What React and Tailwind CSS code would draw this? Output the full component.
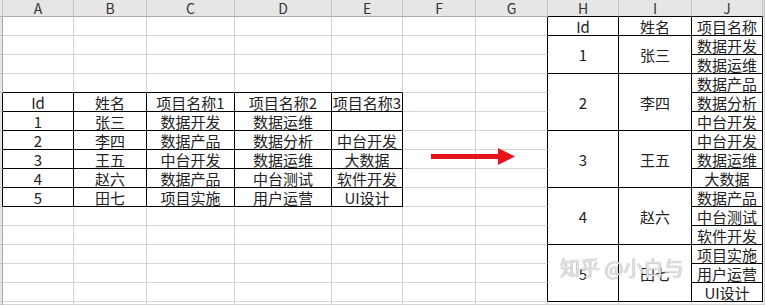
import React from "react";

const FONT = { fontFamily: '"Noto Sans CJK SC", "Noto Sans", sans-serif' };

const LETTERS = ["A", "B", "C", "D", "E", "F", "G", "H", "I", "J", ""];

// Column index: 1 = row-header sliver, 2 = A ... 11 = J, 12 = K (cut off)
// Row index: 1 = column header, 2 = sheet row 1 ... 17 = sheet row 16 (cut off)
const leftTable = [
  ["Id", "姓名", "项目名称1", "项目名称2", "项目名称3"],
  ["1", "张三", "数据开发", "数据运维", ""],
  ["2", "李四", "数据产品", "数据分析", "中台开发"],
  ["3", "王五", "中台开发", "数据运维", "大数据"],
  ["4", "赵六", "数据产品", "中台测试", "软件开发"],
  ["5", "田七", "项目实施", "用户运营", "UI设计"],
];

const groups = [
  { id: "1", name: "张三", items: ["数据开发", "数据运维"] },
  { id: "2", name: "李四", items: ["数据产品", "数据分析", "中台开发"] },
  { id: "3", name: "王五", items: ["中台开发", "数据运维", "大数据"] },
  { id: "4", name: "赵六", items: ["数据产品", "中台测试", "软件开发"] },
  { id: "5", name: "田七", items: ["项目实施", "用户运营", "UI设计"] },
];

function buildCells() {
  const cells = [];
  leftTable.forEach((row, i) => {
    row.forEach((text, j) => {
      cells.push({ r: 6 + i, c: 2 + j, rs: 1, text });
    });
  });
  cells.push({ r: 2, c: 9, rs: 1, text: "Id" });
  cells.push({ r: 2, c: 10, rs: 1, text: "姓名" });
  cells.push({ r: 2, c: 11, rs: 1, text: "项目名称" });
  let r = 3;
  groups.forEach((g) => {
    cells.push({ r, c: 9, rs: g.items.length, text: g.id });
    cells.push({ r, c: 10, rs: g.items.length, text: g.name });
    g.items.forEach((it, k) => cells.push({ r: r + k, c: 11, rs: 1, text: it }));
    r += g.items.length;
  });
  return cells;
}

const tableCells = buildCells();
const occupied = new Set();
tableCells.forEach((t) => {
  for (let k = 0; k < t.rs; k++) occupied.add(`${t.r + k}:${t.c}`);
});
const isTable = (r, c) => occupied.has(`${r}:${c}`);

function gridBorder(right, bottom) {
  if (right && bottom) return "border-r border-b border-r-black border-b-black";
  if (right) return "border-r border-b border-r-black border-b-[#d4d4d4]";
  if (bottom) return "border-r border-b border-r-[#d4d4d4] border-b-black";
  return "border-r border-b border-r-[#d4d4d4] border-b-[#d4d4d4]";
}

function headBorder(bottom) {
  if (bottom) return "border-r border-b border-r-[#c4c4c4] border-b-black";
  return "border-r border-b border-r-[#c4c4c4] border-b-[#ababab]";
}

function Arrow() {
  return (
    <svg
      className="absolute left-[430px] top-[147px]"
      width="86"
      height="19"
      viewBox="0 0 86 19"
    >
      <polygon
        points="1,7 68,7 68,1 85,9.5 68,18 68,12 1,12"
        fill="#e8141c"
      />
    </svg>
  );
}

export default function App() {
  const blanks = [];
  for (let r = 1; r <= 17; r++) {
    for (let c = 1; c <= 12; c++) {
      if (isTable(r, c)) continue;
      const pos = { gridRow: r, gridColumn: c };
      if (r === 1) {
        blanks.push(
          <div
            key={`${r}-${c}`}
            style={pos}
            className={`flex items-center justify-center bg-[#e6e6e6] text-[14px] leading-none text-[#333] ${headBorder(isTable(2, c))}`}
          >
            {c >= 2 ? LETTERS[c - 2] : ""}
          </div>
        );
      } else if (c === 1) {
        blanks.push(
          <div
            key={`${r}-${c}`}
            style={pos}
            className={`bg-[#e6e6e6] ${isTable(r, 2) ? "border-r border-b border-r-black border-b-[#c4c4c4]" : "border-r border-b border-r-[#a8a8a8] border-b-[#c4c4c4]"}`}
          />
        );
      } else {
        blanks.push(
          <div
            key={`${r}-${c}`}
            style={pos}
            className={`bg-white ${gridBorder(isTable(r, c + 1), isTable(r + 1, c))}`}
          />
        );
      }
    }
  }

  return (
    <div className="relative h-[305px] w-[765px] overflow-hidden bg-white" style={FONT}>
      <div className="grid h-full grid-cols-[3px_71px_73px_88px_97px_71px_73px_72px_71px_73px_71px_1fr] grid-rows-[17px_repeat(15,19px)_1fr]">
        {blanks}
        {tableCells.map((t, i) => (
          <div
            key={`t${i}`}
            style={{ gridRow: `${t.r} / span ${t.rs}`, gridColumn: t.c }}
            className="flex items-center justify-center border-r border-b border-black bg-white text-[15px] leading-none text-[#222]"
          >
            {t.text}
          </div>
        ))}
      </div>
      <Arrow />
      <div className="absolute left-[560px] top-[258px] whitespace-pre text-[20px] leading-none text-[#e6e6e6] [text-shadow:0_0_1px_#7a7a7a]">
        {"知乎 @小白与"}
      </div>
    </div>
  );
}
